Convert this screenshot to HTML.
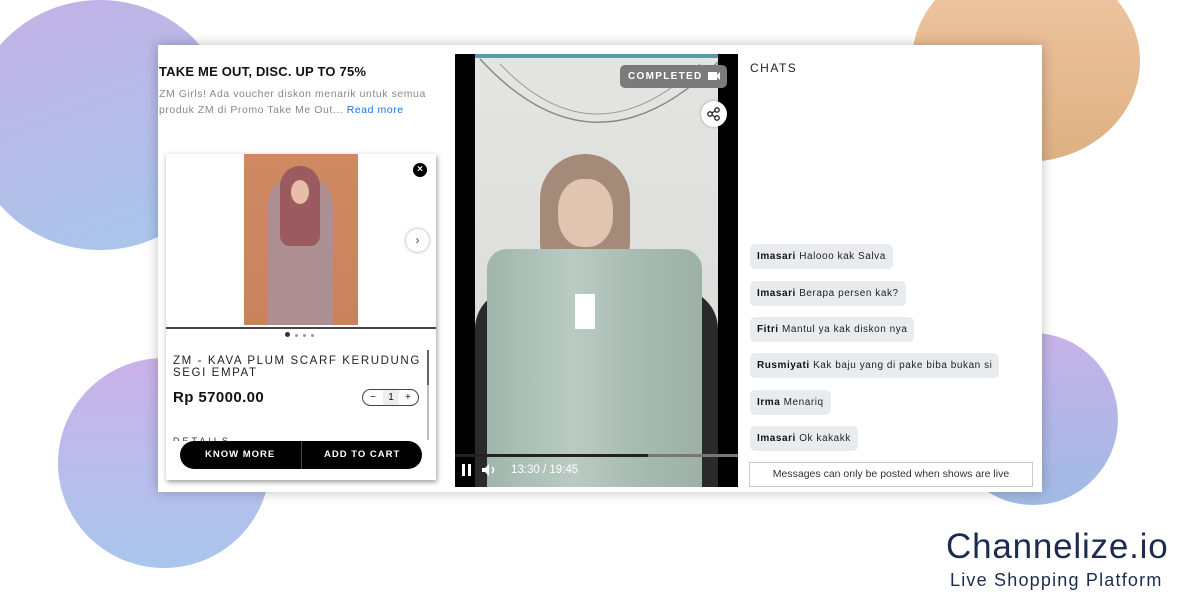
<!DOCTYPE html>
<html><head><meta charset="utf-8"><style>
*{margin:0;padding:0;box-sizing:border-box}
body{width:1200px;height:615px;background:#fff;position:relative;overflow:hidden;font-family:"Liberation Sans",sans-serif}
.c{position:absolute;border-radius:50%}
.card{position:absolute;left:158px;top:45px;width:884px;height:447px;background:#fff;box-shadow:0 0 12px rgba(0,0,0,.25)}
.abs{position:absolute}
.bub{position:absolute;left:750px;background:#e9ecef;border-radius:5px;height:25px;padding:0 7px;font-size:10px;line-height:25px;color:#222;letter-spacing:.55px}
.bub b{color:#111}
</style></head><body>
<div class="c" style="left:-30px;top:0;width:260px;height:250px;background:linear-gradient(160deg,#c4b0e6,#a6c8ea)"></div>
<div class="c" style="left:912px;top:-40px;width:228px;height:202px;background:linear-gradient(180deg,#f0c8a6,#ddb080)"></div>
<div class="c" style="left:58px;top:358px;width:212px;height:210px;background:linear-gradient(180deg,#cbb2ea,#a9c6ec)"></div>
<div class="c" style="left:948px;top:333px;width:170px;height:172px;background:linear-gradient(180deg,#c7b2e8,#9fbbe4)"></div>
<div class="card"></div>
<div class="abs" style="left:159px;top:64px;font-size:13px;font-weight:bold;color:#111;letter-spacing:.2px">TAKE ME OUT, DISC. UP TO 75%</div>
<div class="abs" style="left:159px;top:86px;width:280px;font-size:10.5px;line-height:16px;color:#888;letter-spacing:.55px">ZM Girls! Ada voucher diskon menarik untuk semua produk ZM di Promo Take Me Out... <span style="color:#1a73e8">Read more</span></div>
<div class="abs" style="left:166px;top:154px;width:270px;height:326px;background:#fff;box-shadow:1px 2px 5px rgba(0,0,0,.4)"></div>
<div class="abs" style="left:244px;top:154px;width:114px;height:171px;background:linear-gradient(180deg,#d08a62,#c8825e)"></div>
<div class="abs" style="left:268px;top:175px;width:65px;height:150px;background:#ad8e91;border-radius:30px 30px 0 0"></div>
<div class="abs" style="left:280px;top:166px;width:40px;height:80px;background:#9a5a60;border-radius:20px 20px 10px 10px"></div>
<div class="abs" style="left:291px;top:180px;width:18px;height:24px;background:#e6bda6;border-radius:50%"></div>
<div class="abs" style="left:413px;top:163px;width:14px;height:14px;border-radius:50%;background:#000;color:#fff;font-size:10px;line-height:14px;text-align:center;font-weight:bold">×</div>
<div class="abs" style="left:406px;top:229px;width:23px;height:23px;border-radius:50%;background:#fff;box-shadow:0 0 3px rgba(0,0,0,.4);font-size:12px;line-height:22px;text-align:center;color:#444">›</div>
<div class="abs" style="left:166px;top:327px;width:270px;height:2px;background:#444"></div>
<div class="abs" style="left:285px;top:332px;width:5px;height:5px;border-radius:50%;background:#333"></div>
<div class="abs" style="left:295px;top:334px;font-size:0">
<span style="display:inline-block;width:3px;height:3px;border-radius:50%;background:#999;margin-right:5px"></span><span style="display:inline-block;width:3px;height:3px;border-radius:50%;background:#999;margin-right:5px"></span><span style="display:inline-block;width:3px;height:3px;border-radius:50%;background:#999"></span></div>
<div class="abs" style="left:427px;top:350px;width:2px;height:90px;background:#bbb"></div>
<div class="abs" style="left:427px;top:350px;width:2px;height:35px;background:#666"></div>
<div class="abs" style="left:173px;top:355px;width:250px;font-size:11.5px;line-height:12px;letter-spacing:1.6px;color:#222">ZM - KAVA PLUM SCARF KERUDUNG SEGI EMPAT</div>
<div class="abs" style="left:173px;top:389px;font-size:15px;font-weight:bold;color:#111;letter-spacing:.4px">Rp 57000.00</div>
<div class="abs" style="left:362px;top:389px;width:57px;height:17px;border:1px solid #444;border-radius:9px;font-size:10px;line-height:15px;color:#111"><span style="position:absolute;left:7px">−</span><span style="position:absolute;left:20px;width:16px;background:#eee;text-align:center">1</span><span style="position:absolute;left:42px">+</span></div>
<div class="abs" style="left:173px;top:436px;font-size:9px;letter-spacing:3px;color:#333;height:5px;overflow:hidden">DETAILS</div>
<div class="abs" style="left:180px;top:441px;width:242px;height:28px;background:#000;border-radius:14px;color:#fff;font-size:9.5px;font-weight:bold;letter-spacing:1px;line-height:28px">
<span style="position:absolute;left:25px">KNOW MORE</span><span style="position:absolute;left:121px;top:0;width:1px;height:28px;background:#444"></span><span style="position:absolute;left:144px">ADD TO CART</span></div>
<div class="abs" style="left:455px;top:54px;width:283px;height:433px;background:#000"></div>
<div class="abs" style="left:475px;top:54px;width:243px;height:433px;background:linear-gradient(180deg,#e4e5e3 0%,#dedfdc 50%,#d6d8d4 100%);overflow:hidden">
<div style="position:absolute;left:0;top:0;width:243px;height:4px;background:#5a9aa3"></div>
<svg style="position:absolute;left:0;top:0" width="243" height="90"><path d="M5 5 Q120 130 243 8" stroke="#888" fill="none" stroke-width="1.5"/><path d="M25 10 Q120 110 225 10" stroke="#999" fill="none"/></svg>
<div style="position:absolute;left:65px;top:100px;width:90px;height:110px;background:#a48a78;border-radius:45px 45px 20px 20px"></div>
<div style="position:absolute;left:83px;top:125px;width:55px;height:68px;background:#e2c5b0;border-radius:45%"></div>
<div style="position:absolute;left:0;top:235px;width:243px;height:198px;background:#2a2a2a;border-radius:40px 40px 0 0"></div>
<div style="position:absolute;left:12px;top:195px;width:215px;height:238px;background:linear-gradient(90deg,#9fb6ad,#b9cbc2 40%,#a8bbb2 70%,#9db0a7);border-radius:20px 20px 0 0"></div>
<div style="position:absolute;left:100px;top:240px;width:20px;height:35px;background:#fff"></div>
</div>
<div class="abs" style="left:455px;top:454px;width:283px;height:3px;background:#777"></div>
<div class="abs" style="left:455px;top:454px;width:193px;height:3px;background:#222"></div>
<div class="abs" style="left:462px;top:464px;width:3px;height:12px;background:#fff"></div>
<div class="abs" style="left:468px;top:464px;width:3px;height:12px;background:#fff"></div>
<svg class="abs" style="left:481px;top:463px" width="18" height="14"><path d="M1 5h3l4-4v12l-4-4H1z" fill="#fff"/><path d="M11 4q3 3 0 6" stroke="#fff" fill="none" stroke-width="1.5"/></svg>
<div class="abs" style="left:511px;top:464px;font-size:11.5px;color:#fff">13:30 / 19:45</div>
<div class="abs" style="left:620px;top:65px;width:107px;height:23px;background:#7b7b7b;border-radius:5px;color:#fff;font-size:10px;font-weight:bold;letter-spacing:1.3px;line-height:23px;padding-left:8px">COMPLETED<span style="position:absolute;left:88px;top:7px;width:9px;height:8px;background:#fff"></span><span style="position:absolute;left:96px;top:7px;border:4px solid transparent;border-right:4px solid #fff;border-left:0"></span></div>
<div class="abs" style="left:701px;top:101px;width:26px;height:26px;border-radius:50%;background:#fff;box-shadow:0 0 3px rgba(0,0,0,.3)"><svg width="26" height="26"><circle cx="16" cy="9" r="2.2" stroke="#222" fill="none" stroke-width="1.3"/><circle cx="9" cy="13" r="2.2" stroke="#222" fill="none" stroke-width="1.3"/><circle cx="16" cy="17" r="2.2" stroke="#222" fill="none" stroke-width="1.3"/><path d="M11 12l3-2M11 14l3 2" stroke="#222" stroke-width="1.3"/></svg></div>
<div class="abs" style="left:750px;top:61px;font-size:12px;letter-spacing:1.5px;color:#222">CHATS</div>
<div class="bub" style="top:244px"><b>Imasari</b> Halooo kak Salva</div>
<div class="bub" style="top:281px"><b>Imasari</b> Berapa persen kak?</div>
<div class="bub" style="top:317px"><b>Fitri</b> Mantul ya kak diskon nya</div>
<div class="bub" style="top:353px"><b>Rusmiyati</b> Kak baju yang di pake biba bukan si</div>
<div class="bub" style="top:390px"><b>Irma</b> Menariq</div>
<div class="bub" style="top:426px"><b>Imasari</b> Ok kakakk</div>
<div class="abs" style="left:749px;top:462px;width:284px;height:25px;border:1px solid #ccc;font-size:10.5px;line-height:23px;text-align:center;color:#333">Messages can only be posted when shows are live</div>
<div class="abs" style="left:946px;top:527px;font-size:35px;color:#1c2b4f;line-height:40px;letter-spacing:.8px">Channelize.io</div>
<div class="abs" style="left:950px;top:570px;font-size:18px;color:#1c2b4f;letter-spacing:1.2px">Live Shopping Platform</div>
</body></html>
